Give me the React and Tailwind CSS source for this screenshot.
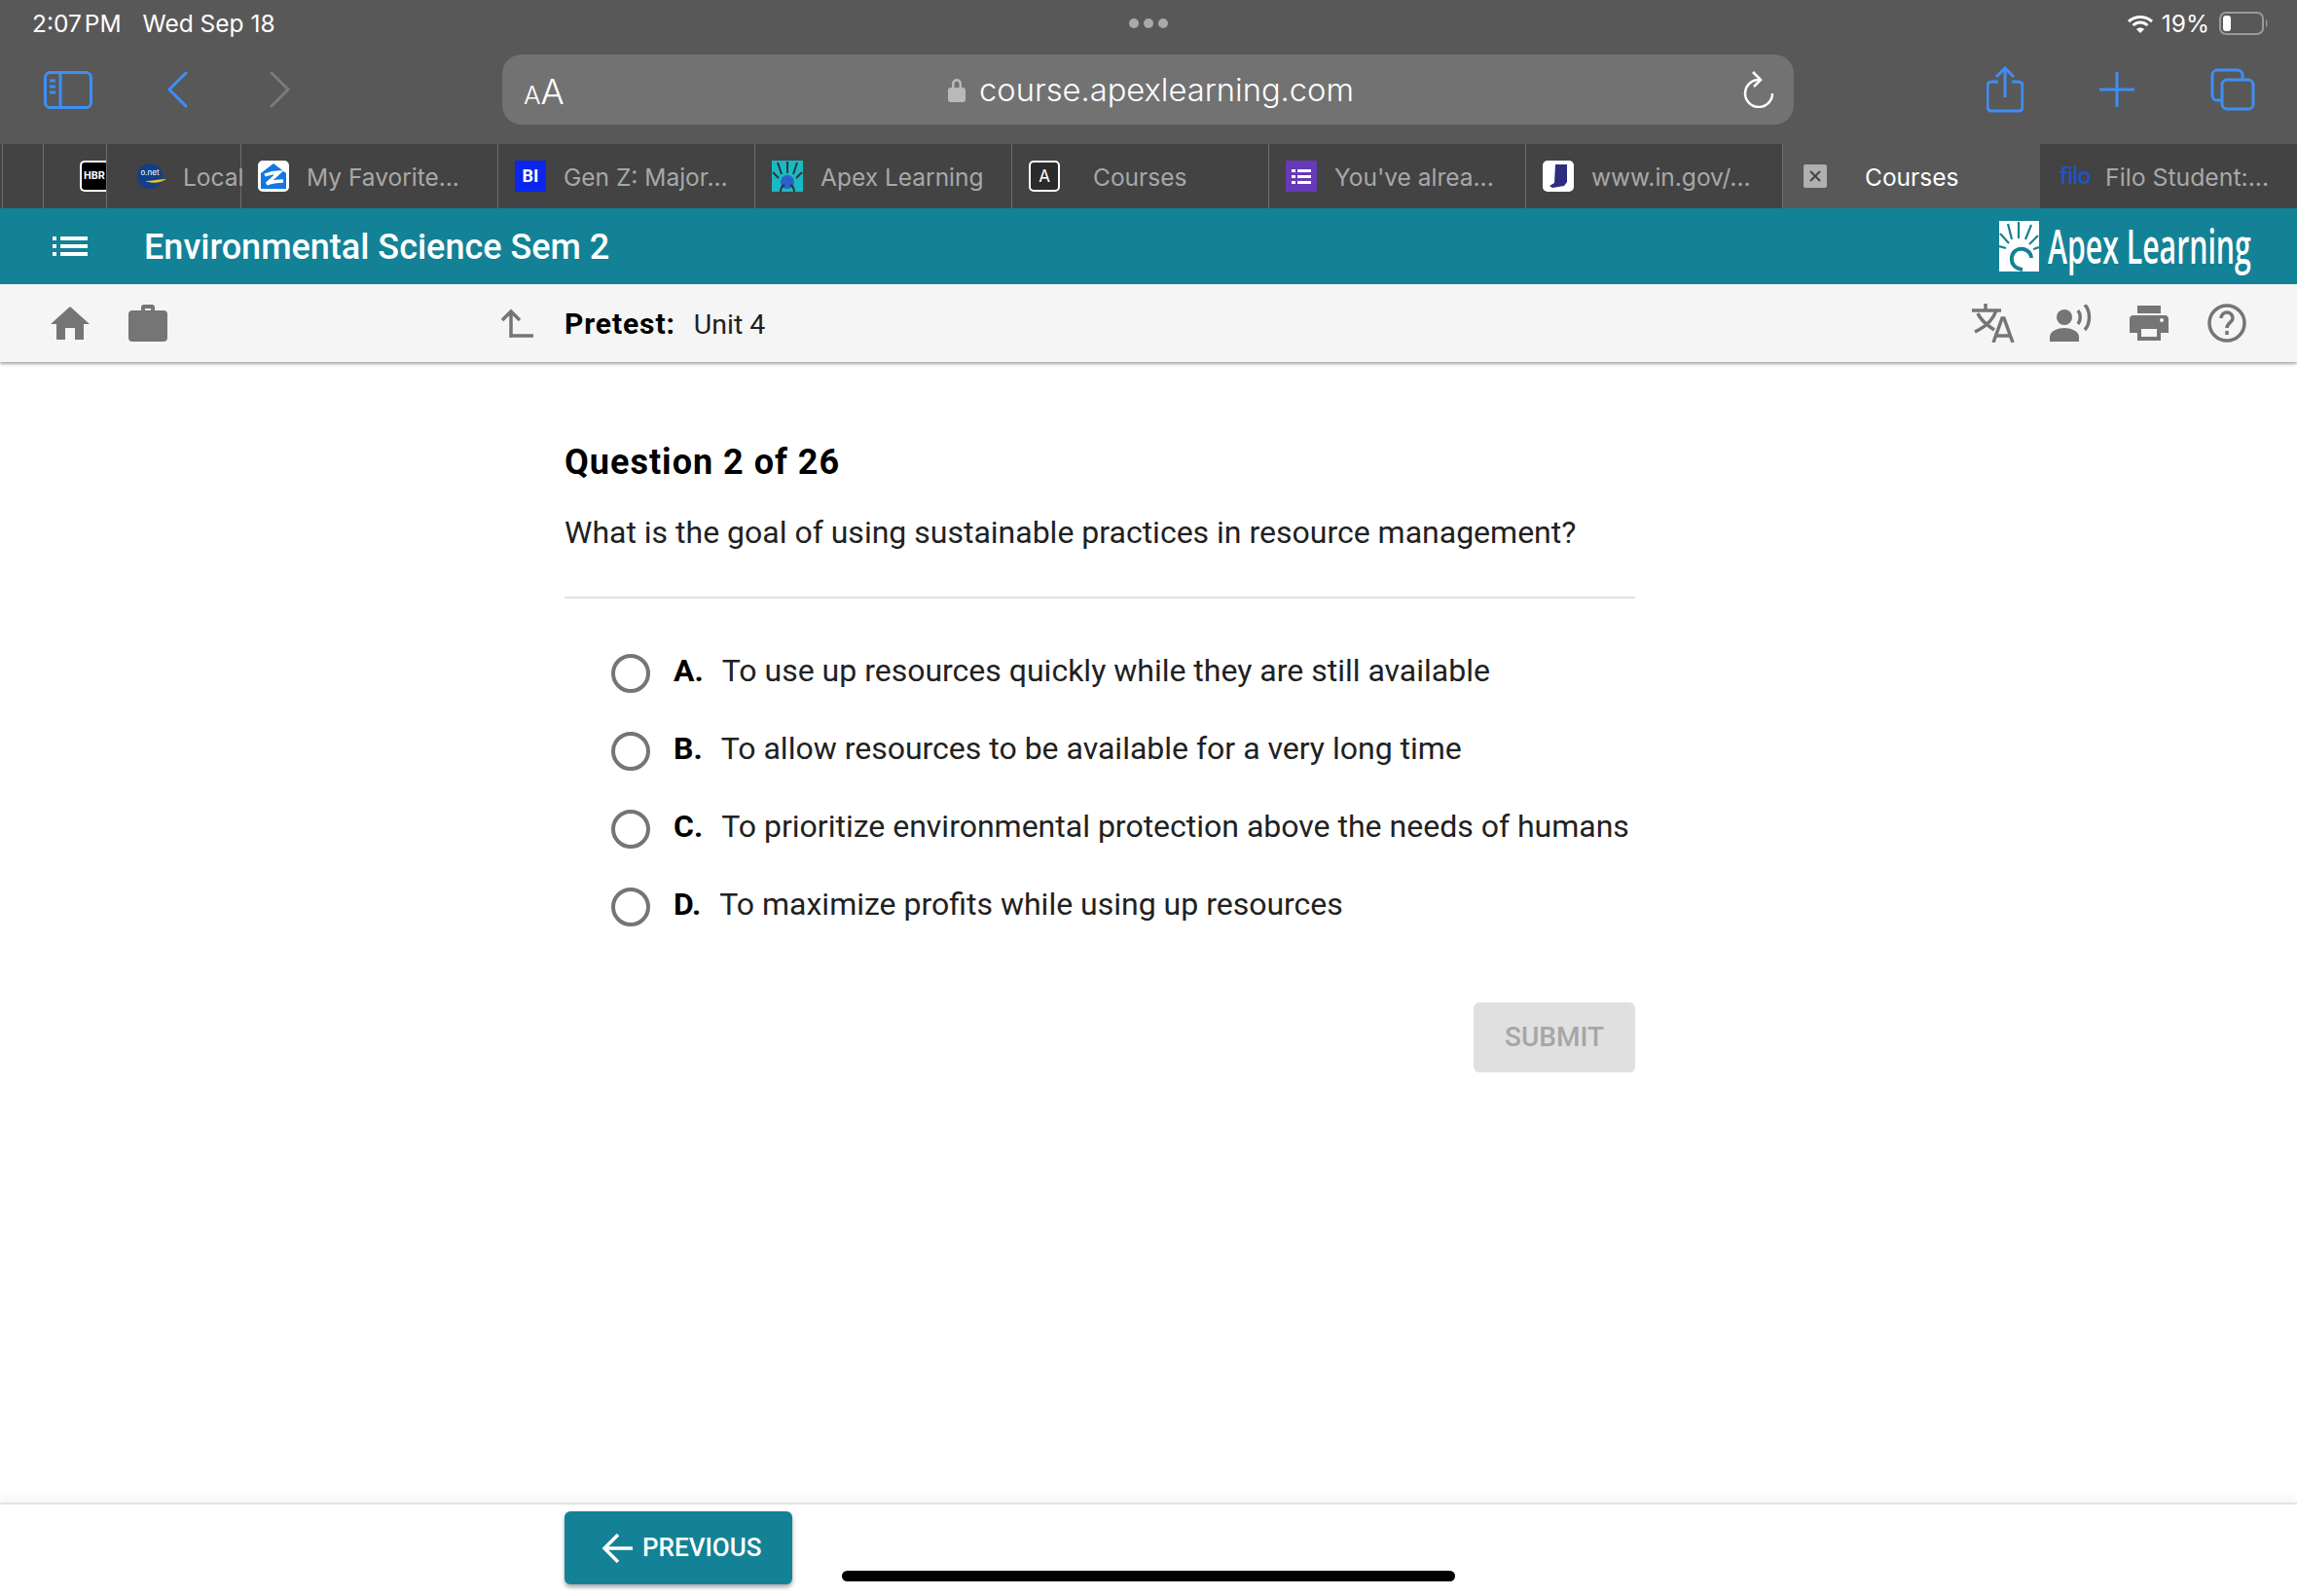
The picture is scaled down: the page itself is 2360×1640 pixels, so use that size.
import React from 'react';

const tabs = [
  { label: 'Gen Z: Major...', icon: 'bi' },
  { label: 'Apex Learning', icon: 'apex' },
  { label: 'Courses', icon: 'a', gap: 'w-[34px]' },
  { label: "You've alrea...", icon: 'form' },
  { label: 'www.in.gov/...', icon: 'gov' },
];

const options = [
  { letter: 'A.', text: 'To use up resources quickly while they are still available' },
  { letter: 'B.', text: 'To allow resources to be available for a very long time' },
  { letter: 'C.', text: 'To prioritize environmental protection above the needs of humans' },
  { letter: 'D.', text: 'To maximize profits while using up resources' },
];

const ApexMark = ({ className }) => (
  <svg viewBox="0 0 41 52" className={className}>
    <rect width="41" height="52" fill="#fff" />
    <g stroke="#138296" strokeWidth="2.2" fill="none">
      <path d="M9 3l4 16M20 1v17M33 4l-6 15M1 13l9 10M40 15l-9 9M0 26l7 2M41 27l-6 2" />
      <path d="M24 50c-8-1-12-6-11-13 1-6 6-9 12-8 5 1 8 5 8 9" strokeWidth="4" />
    </g>
    <circle cx="24" cy="39" r="5" fill="#fff" />
  </svg>
);

const TabIcon = ({ type }) => {
  if (type === 'bi') {
    return <div className="w-8 h-8 bg-[#0b25ee] flex items-center justify-center text-white text-[18px] font-bold font-['Roboto',sans-serif]">BI</div>;
  }
  if (type === 'apex') {
    return (
      <svg viewBox="0 0 32 32" className="w-8 h-8">
        <rect width="32" height="32" fill="#18b9c4" />
        <path d="M6 2l4 12M16 1v12M26 2l-4 12M1 12l6 6M31 12l-6 6" stroke="#333" strokeWidth="2" />
        <circle cx="16" cy="22" r="7" fill="#2a62c9" />
        <path d="M9 32c0-4 2-6 4-7M23 32c0-4-2-6-4-7" stroke="#333" strokeWidth="2" fill="none" />
      </svg>
    );
  }
  if (type === 'a') {
    return <div className="w-8 h-8 rounded-[5px] border-2 border-white bg-[#2b2b2b] flex items-center justify-center text-white text-[17px] font-['Inter',sans-serif]">A</div>;
  }
  if (type === 'form') {
    return (
      <div className="w-8 h-8 bg-[#673ab7] flex flex-col items-center justify-center gap-[3px]">
        {[0, 1, 2].map((i) => (
          <div key={i} className="flex gap-[2px]">
            <div className="w-1 h-[3px] bg-white" />
            <div className="w-[14px] h-[3px] bg-white" />
          </div>
        ))}
      </div>
    );
  }
  if (type === 'zillow') {
    return (
      <svg viewBox="0 0 32 32" className="w-8 h-8">
        <rect width="32" height="32" rx="5" fill="#fff" />
        <path d="M16 3L29 13v16H3V13z" fill="#1277e1" />
        <path d="M7 15c5-2 10-3 15-3L9 24c5-2 11-3 17-3" fill="none" stroke="#fff" strokeWidth="3.500" />
      </svg>
    );
  }
  return (
    <svg viewBox="0 0 32 32" className="w-8 h-8">
      <rect width="32" height="32" rx="5" fill="#fff" />
      <path d="M13 4h12v18l-3 4-12 2-3-2 5-3z" fill="#2d2c7f" />
    </svg>
  );
};

const Tab = ({ label, icon, gap = 'w-[18px]' }) => (
  <div className="w-[264px] h-full shrink-0 border-r border-[#6e6e6e] pl-[17px] flex items-center text-[#a8a8a8]">
    <TabIcon type={icon} />
    <div className={`${gap} shrink-0`} />
    <span className="pt-[2px]">{label}</span>
  </div>
);

const Chrome = () => (
  <div className="bg-[#585858] font-['Inter',sans-serif]">
    <div className="h-[48px] pl-[33px] pr-[30px] flex items-center justify-between text-white text-[24.5px]">
      <div className="flex gap-[22px] w-[300px]">
        <span className="[word-spacing:-4px]">2:07 PM</span>
        <span>Wed Sep 18</span>
      </div>
      <div className="flex gap-[5px] -ml-[3px]">
        <div className="w-[10px] h-[10px] rounded-full bg-[#a9a9a9]" />
        <div className="w-[10px] h-[10px] rounded-full bg-[#a9a9a9]" />
        <div className="w-[10px] h-[10px] rounded-full bg-[#a9a9a9]" />
      </div>
      <div className="flex items-center justify-end gap-[8px] w-[300px]">
        <svg viewBox="0 0 28 20" className="w-[28px] h-[20px]" fill="none" stroke="#fff" strokeWidth="3">
          <path d="M2 8c7-6 17-6 24 0M6.500 12c4.500-4 10.500-4 15 0" />
          <path d="M14 20l-4-4c2-2 6-2 8 0z" fill="#fff" stroke="none" />
        </svg>
        <span>19%</span>
        <svg viewBox="0 0 50 24" className="w-[50px] h-[24px] ml-[2px]" fill="none">
          <rect x="1" y="1" width="44" height="22" rx="6" stroke="#9a9a9a" strokeWidth="2" />
          <rect x="4" y="4" width="8" height="16" rx="3" fill="#fff" />
          <path d="M48 8c2 1 2 7 0 8z" fill="#9a9a9a" />
        </svg>
      </div>
    </div>
    <div className="h-[100px] pb-[12px] flex items-center">
      <div className="w-[516px] shrink-0 flex items-center pl-[45px]">
        <svg viewBox="0 0 50 39" className="w-[50px] h-[39px]" fill="none" stroke="#3f8ef5" strokeWidth="3">
          <rect x="1.500" y="1.500" width="47" height="36" rx="5" />
          <path d="M17 1.500v36M6 10h6M6 16h6M6 22h6" />
        </svg>
        <svg viewBox="0 0 22 38" className="w-[22px] h-[38px] ml-[76px]" fill="none" stroke="#3f8ef5" strokeWidth="3" strokeLinecap="round">
          <path d="M20 2L3 19l17 17" />
        </svg>
        <svg viewBox="0 0 22 38" className="w-[22px] h-[38px] ml-[84px]" fill="none" stroke="#7b7b7b" strokeWidth="3" strokeLinecap="round">
          <path d="M2 2l17 17L2 36" />
        </svg>
      </div>
      <div className="w-[1327px] shrink-0 h-[72px] rounded-[20px] bg-[#727272] flex items-center justify-between pl-[22px] pr-[20px] text-white">
        <span className="w-[70px] text-[36px] leading-none font-light pt-[4px]"><span className="text-[26px]">A</span>A</span>
        <div className="flex items-center gap-[14px] pl-[4px]">
          <svg viewBox="0 0 18 26" className="w-[18px] h-[26px]" fill="#b9b9b9">
            <path d="M4 12V7a5 5 0 0110 0v5h-2.500V7a2.500 2.500 0 00-5 0v5z" />
            <rect y="11" width="18" height="15" rx="3" />
          </svg>
          <span className="text-[32.700px] font-light pt-[1px]">course.apexlearning.com</span>
        </div>
        <div className="w-[70px] flex justify-end">
          <svg viewBox="0 0 32 38" className="w-[32px] h-[38px]" fill="none" stroke="#fff" strokeWidth="2.500">
            <path d="M16 9A14 14 0 1 0 30 23" />
            <path d="M10 1l8 8-7 7" />
          </svg>
        </div>
      </div>
      <div className="flex-1 flex items-center pl-[198px]">
        <svg viewBox="0 0 38 48" className="w-[38px] h-[48px]" fill="none" stroke="#3f8ef5" strokeWidth="3">
          <path d="M12 16H5a4 4 0 00-4 4v22a4 4 0 004 4h28a4 4 0 004-4V20a4 4 0 00-4-4h-7M19 32V3M10 11l9-9 9 9" />
        </svg>
        <svg viewBox="0 0 36 36" className="w-[36px] h-[36px] ml-[78px]" stroke="#3f8ef5" strokeWidth="3">
          <path d="M18 0v36M0 18h36" />
        </svg>
        <svg viewBox="0 0 46 44" className="w-[46px] h-[44px] ml-[78px]" fill="none" stroke="#3f8ef5" strokeWidth="3">
          <path d="M11 33H7a5 5 0 01-5-5V7a5 5 0 015-5h21a5 5 0 015 5v4" />
          <rect x="12" y="12" width="32" height="30" rx="5" />
        </svg>
      </div>
    </div>
    <div className="h-[66px] flex bg-[#434343] text-[24.5px] leading-none">
      <div className="w-[3px] shrink-0 border-r border-[#6e6e6e]" />
      <div className="w-[42px] shrink-0 border-r border-[#6e6e6e]" />
      <div className="w-[65px] shrink-0 border-r border-[#6e6e6e] flex items-center justify-end overflow-hidden">
        <div className="w-[27px] h-8 rounded-l-[5px] bg-black border-l-2 border-y-2 border-white text-white text-[11px] font-bold overflow-hidden whitespace-nowrap">
          <span className="leading-[28px] font-['Roboto',sans-serif] pl-[2px]">HBR</span>
        </div>
      </div>
      <div className="w-[138px] shrink-0 border-r border-[#6e6e6e] pl-[31px] flex items-center text-[#a8a8a8]">
        <svg viewBox="0 0 30 28" className="w-[30px] h-[28px] shrink-0">
          <circle cx="13" cy="14" r="13" fill="#123f86" />
          <path d="M8 19c7 0 15-2 22-2-6 4-14 5-22 2z" fill="#e8c32e" />
          <text x="13" y="13" textAnchor="middle" fontSize="8" fill="#fff">o.net</text>
        </svg>
        <span className="ml-[17px] pt-[2px]">Local</span>
      </div>
      <Tab label="My Favorite..." icon="zillow" />
      {tabs.map((t) => (
        <Tab key={t.label} {...t} />
      ))}
      <div className="w-[264px] shrink-0 bg-[#585858] flex items-center pl-[21px] text-white">
        <div className="w-6 h-6 bg-[#b0b0b0] rounded-[2px] flex items-center justify-center">
          <svg viewBox="0 0 12 12" className="w-3 h-3" stroke="#444" strokeWidth="2"><path d="M1 1l10 10M11 1L1 11" /></svg>
        </div>
        <span className="ml-[39px] pt-[2px]">Courses</span>
      </div>
      <div className="flex-1 flex items-center pl-[20px] text-[#a8a8a8]">
        <span className="w-[47px] text-[#1d56c8] text-[24px] font-medium tracking-[-1px]">filo</span>
        <span className="pt-[2px] text-[24.800px]">Filo Student:...</span>
      </div>
    </div>
  </div>
);

const CourseBar = () => (
  <div className="h-[78px] bg-[#138296] flex items-center justify-between pl-[54px] pr-[47px] text-white">
    <div className="flex items-center">
      <svg viewBox="0 0 36 20" className="w-[36px] h-[20px]" fill="#fff">
        <path d="M0 0h4v4H0zM0 8h4v4H0zM0 16h4v4H0zM8 0h28v4H8zM8 8h28v4H8zM8 16h28v4H8z" />
      </svg>
      <span className="ml-[58px] text-[36px] font-medium pt-[2px]">Environmental Science Sem 2</span>
    </div>
    <div className="flex items-center">
      <ApexMark className="w-[41px] h-[52px]" />
      <span className="w-[209px] ml-[9px] text-[48px] leading-none whitespace-nowrap origin-left scale-x-[0.63] font-semibold font-['Open_Sans',sans-serif]">Apex Learning</span>
    </div>
  </div>
);

const SubBar = () => (
  <div className="h-[80px] bg-[#f5f5f5] shadow-[0_2px_3px_rgba(0,0,0,0.35)] relative flex items-center text-[#757575]">
    <div className="w-[580px] shrink-0 flex items-center pl-[52px]">
      <svg viewBox="0 0 40 34" className="w-[40px] h-[34px]" fill="currentColor">
        <path d="M20 0L0 18h6v16h9V22h10v12h9V18h6z" />
      </svg>
      <svg viewBox="0 0 40 38" className="w-[40px] h-[38px] ml-[40px]" fill="currentColor">
        <path d="M13 6V3a3 3 0 013-3h8a3 3 0 013 3v3h9a4 4 0 014 4v24a4 4 0 01-4 4H4a4 4 0 01-4-4V10a4 4 0 014-4zm4 0h6V4h-6z" />
      </svg>
      <svg viewBox="0 0 34 30" className="w-[34px] h-[30px] ml-[342px]" fill="none" stroke="currentColor" strokeWidth="3.500">
        <path d="M11 30V3M2 12l9-9 9 9M10 28h24" />
      </svg>
    </div>
    <div className="flex-1 text-[28.500px] text-[#212121] pt-[2px]">
      <span className="font-bold text-black text-[30px] tracking-[0.9px]">Pretest:</span>
      <span className="ml-[19px]">Unit 4</span>
    </div>
    <div className="flex items-center pr-[52px]">
      <svg viewBox="0 0 44 40" className="w-[44px] h-[40px]" fill="none" stroke="currentColor" strokeWidth="3.500">
        <path d="M0 7h30M14 0v7M25 7c-3 9-11 17-22 22M6 10c3 7 9 12 17 17M22 40l9-25h2l9 25M25 33h14" />
      </svg>
      <svg viewBox="0 0 44 38" className="w-[44px] h-[38px] ml-[36px]" fill="currentColor">
        <circle cx="15" cy="13" r="8" />
        <path d="M0 38v-5c0-6 9-9 15-9s15 3 15 9v5z" />
        <path d="M29 6c3 4 3 10 0 14M36 0c6 7 6 19 0 26" fill="none" stroke="currentColor" strokeWidth="3.500" />
      </svg>
      <svg viewBox="0 0 40 36" className="w-[40px] h-[36px] ml-[38px]" fill="currentColor">
        <path d="M8 0h24v8H8zM4 10h32a4 4 0 014 4v14h-8v8H8v-8H0V14a4 4 0 014-4zm8 14v8h16v-8z" />
        <circle cx="33" cy="15" r="2" fill="#f5f5f5" />
      </svg>
      <svg viewBox="0 0 40 40" className="w-[40px] h-[40px] ml-[40px]" fill="none" stroke="currentColor" strokeWidth="3.500">
        <circle cx="20" cy="20" r="18" />
        <path d="M14 15a6 6 0 1112 0c0 4-6 5-6 10" />
        <path d="M20 28v4" />
      </svg>
    </div>
  </div>
);

const Question = () => (
  <div className="flex-1 pl-[580px] font-['Roboto',sans-serif]">
    <div className="w-[1100px]">
      <h1 className="mt-[81px] text-[36px] leading-[44px] font-bold text-black tracking-[1px]">Question 2 of 26</h1>
      <p className="mt-[28px] text-[32px] leading-[44px] text-[#212121]">What is the goal of using sustainable practices in resource management?</p>
      <div className="mt-[44px] h-[2px] bg-[#e0e0e0]" />
      <div className="mt-[57px] flex flex-col gap-[40px] pl-[48px]">
        {options.map((o) => (
          <div key={o.letter} className="h-[40px] flex items-center text-[32px] text-[#212121]">
            <div className="w-[40px] h-[40px] rounded-full border-[4px] border-[#757575] bg-white" />
            <div className="ml-[24px] -mt-[6px] flex">
              <span className="font-bold text-black mr-[19px]">{o.letter}</span>
              <span>{o.text}</span>
            </div>
          </div>
        ))}
      </div>
      <div className="mt-[78px] flex justify-end">
        <div className="w-[166px] h-[72px] rounded-[6px] bg-[#e0e0e0] text-[#a6a6a6] text-[28px] font-medium flex items-center justify-center">SUBMIT</div>
      </div>
    </div>
  </div>
);

const Footer = () => (
  <div className="h-[96px] relative bg-white border-t-2 border-[#e2e2e2] shadow-[0_-6px_8px_rgba(0,0,0,0.04)] pl-[580px] pt-[7px] font-['Roboto',sans-serif]">
    <div className="w-[234px] h-[75px] rounded-[6px] bg-[#138296] shadow-[0_3px_4px_rgba(0,0,0,0.35)] flex items-center pl-[38px] text-white text-[26px]">
      <svg viewBox="0 0 32 32" className="w-[32px] h-[32px]" fill="none" stroke="#fff" strokeWidth="3.500">
        <path d="M32 16H3M17 2L3 16l14 14" />
      </svg>
      <span className="ml-[10px] font-medium">PREVIOUS</span>
    </div>
    <div className="absolute left-[865px] top-[68px] w-[630px] h-[11px] rounded-full bg-black" />
  </div>
);

export default function App() {
  return (
    <div className="w-[2360px] h-[1640px] flex flex-col bg-white overflow-hidden font-['Roboto',sans-serif]">
      <Chrome />
      <CourseBar />
      <SubBar />
      <Question />
      <Footer />
    </div>
  );
}
